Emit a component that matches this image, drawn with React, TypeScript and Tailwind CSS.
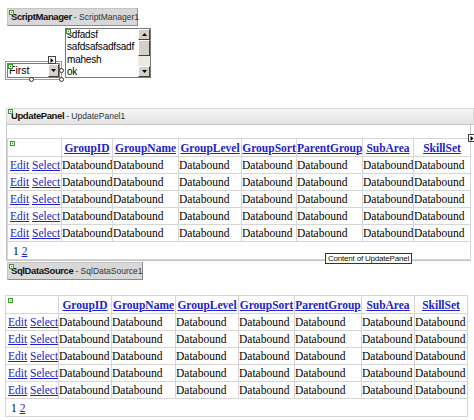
import React from 'react'

const headers = ['GroupID', 'GroupName', 'GroupLevel', 'GroupSort', 'ParentGroup', 'SubArea', 'SkillSet']

// little green control glyph the designer draws at a control's corner
function Glyph({ className = '' }: { className?: string }) {
  return (
    <svg width="5" height="5" viewBox="0 0 5 5" className={className}>
      <rect x="0.5" y="0.5" width="4" height="4" fill="#e8f5e0" stroke="#3c9a2c" strokeWidth="1" />
      <rect x="2" y="2" width="1" height="1" fill="#3c9a2c" />
    </svg>
  )
}

function SmartTag({ className = '' }: { className?: string }) {
  return (
    <div className={`w-[8px] h-[8px] border border-[#444] bg-white flex items-center justify-center ${className}`}>
      <svg width="4" height="5" viewBox="0 0 4 5">
        <path d="M0.5 0 L3.5 2.5 L0.5 5 Z" fill="#000" />
      </svg>
    </div>
  )
}

function Handle({ className = '' }: { className?: string }) {
  return <div className={`absolute w-[5px] h-[5px] rounded-full border border-[#333] bg-white ${className}`} />
}

function DesignerTag({ name, id, className = '' }: { name: string; id: string; className?: string }) {
  return (
    <div className={`relative flex items-center h-[18px] pl-[3px] bg-[#d8d8d8] border border-[#c4c4c4] border-b-[#8c8c8c] border-r-[#8c8c8c] whitespace-nowrap ${className}`}>
      <Glyph className="absolute left-[1px] top-[1px]" />
      <span className="text-[9.5px] font-bold tracking-[-0.4px] text-[#111]">{name}</span>
      <span className="text-[8.5px] text-[#333] ml-[2px]">- {id}</span>
    </div>
  )
}

function Grid({ widths, className = '' }: { widths: number[]; className?: string }) {
  const cell = 'border border-[#d6d6d6] p-0 whitespace-nowrap leading-[14px] overflow-hidden'
  const link = 'text-[#2222cc] underline'
  return (
    <table className={`table-fixed border-collapse font-['Liberation_Serif',serif] text-[11.5px] text-black ${className}`}>
      <colgroup>
        {widths.map((w, i) => (
          <col key={i} style={{ width: w }} />
        ))}
      </colgroup>
      <tbody>
        <tr className="h-[18px]">
          <td className={`${cell} relative align-top`}>
            <Glyph className="absolute left-[2px] top-[2px]" />
          </td>
          {headers.map((h) => (
            <td key={h} className={`${cell} text-center font-bold ${link}`}>
              {h}
            </td>
          ))}
        </tr>
        {[0, 1, 2, 3, 4].map((r) => (
          <tr key={r} className="h-[17px]">
            <td className={`${cell} pl-[2px]`}>
              <span className={link}>Edit</span> <span className={link}>Select</span>
            </td>
            {headers.map((h) => (
              <td key={h} className={cell}>
                Databound
              </td>
            ))}
          </tr>
        ))}
        <tr className="h-[18px]">
          <td colSpan={8} className={`${cell} pl-[5px]`}>
            1 <span className={link}>2</span>
          </td>
        </tr>
      </tbody>
    </table>
  )
}

export default function App() {
  return (
    <div className="relative w-[474px] h-[420px] overflow-hidden bg-white font-['Liberation_Sans',sans-serif]">
      <div className="pt-[8px] pl-[7px]">
        <DesignerTag name="ScriptManager" id="ScriptManager1" className="w-[131px] h-[17px]" />
      </div>

      {/* dropdown + listbox */}
      <div className="flex items-end pl-[5px] mt-[2px]">
        <div className="relative w-[57px] h-[19px] border border-[#9a9a9a] p-[1px]">
          <div className="flex h-[15px] border border-[#7a7a7a] bg-white">
            <div className="relative flex-1 text-[10.5px] leading-[13px] pl-[1px] text-black">
              <Glyph className="absolute left-0 top-0" />
              First
            </div>
            <div className="w-[11px] bg-[#d4d0c8] border border-[#fff] border-b-[#404040] border-r-[#404040] flex items-center justify-center">
              <svg width="5" height="3" viewBox="0 0 5 3">
                <path d="M0 0 H5 L2.5 3 Z" fill="#000" />
              </svg>
            </div>
          </div>
          <SmartTag className="absolute left-[42px] top-[-6px]" />
          <Handle className="left-[23px] bottom-[-3px]" />
          <Handle className="right-[-3px] bottom-[-3px]" />
          <Handle className="right-[-3px] top-[6px]" />
        </div>

        <div className="relative ml-[3px] mb-[2px] flex w-[86px] h-[50px] border border-[#7a7a7a] bg-white">
          <Glyph className="absolute left-[0px] top-[0px]" />
          <div className="flex-1 pl-[1px] text-[10px] tracking-[-0.2px] leading-[12.3px] text-black whitespace-nowrap overflow-hidden">
            <div>sdfadsf</div>
            <div>safdsafsadfsadf</div>
            <div>mahesh</div>
            <div>ok</div>
          </div>
          <div className="w-[12px] flex flex-col bg-[#eceae4]">
            <div className="h-[11px] bg-[#d4d0c8] border border-[#fff] border-b-[#404040] border-r-[#404040] flex items-center justify-center">
              <svg width="5" height="3" viewBox="0 0 5 3">
                <path d="M0 3 H5 L2.5 0 Z" fill="#000" />
              </svg>
            </div>
            <div className="h-[16px] bg-[#d4d0c8] border border-[#fff] border-b-[#404040] border-r-[#404040]" />
            <div className="flex-1" />
            <div className="h-[11px] bg-[#d4d0c8] border border-[#fff] border-b-[#404040] border-r-[#404040] flex items-center justify-center">
              <svg width="5" height="3" viewBox="0 0 5 3">
                <path d="M0 0 H5 L2.5 3 Z" fill="#000" />
              </svg>
            </div>
          </div>
        </div>
      </div>

      {/* UpdatePanel */}
      <div className="relative ml-[6px] mt-[28px] w-[468px]">
        <div className="relative flex items-center h-[17px] pl-[4px] bg-gradient-to-b from-[#f6f6f6] to-[#e4e4e4] border border-[#d8d8d8] border-b-[#c6c6c6] whitespace-nowrap">
          <Glyph className="absolute left-[1px] top-[0px]" />
          <span className="text-[9.5px] font-bold tracking-[-0.4px] text-[#111]">UpdatePanel</span>
          <span className="text-[8.5px] text-[#333] ml-[2px]">- UpdatePanel1</span>
        </div>
        <div className="relative pt-[13px] border-l border-r border-b border-[#c4c4c4] w-[465px]">
          <Grid widths={[54, 51, 66, 63, 55, 66, 51, 57]} className="w-[463px]" />
          <SmartTag className="absolute right-[-6px] top-[9px]" />
        </div>
        <div className="absolute left-[319px] top-[145px] h-[11px] px-[2px] flex items-center border border-[#333] bg-[#fffff4] text-[8px] tracking-[-0.2px] text-[#111] whitespace-nowrap">
          Content of UpdatePanel
        </div>
      </div>

      <div className="ml-[7px] mt-[1px]">
        <DesignerTag name="SqlDataSource" id="SqlDataSource1" className="w-[136px]" />
      </div>

      <div className="ml-[5px] mt-[15px]">
        <Grid widths={[53, 53, 64, 63, 56, 67, 53, 53]} className="w-[462px]" />
      </div>
    </div>
  )
}
